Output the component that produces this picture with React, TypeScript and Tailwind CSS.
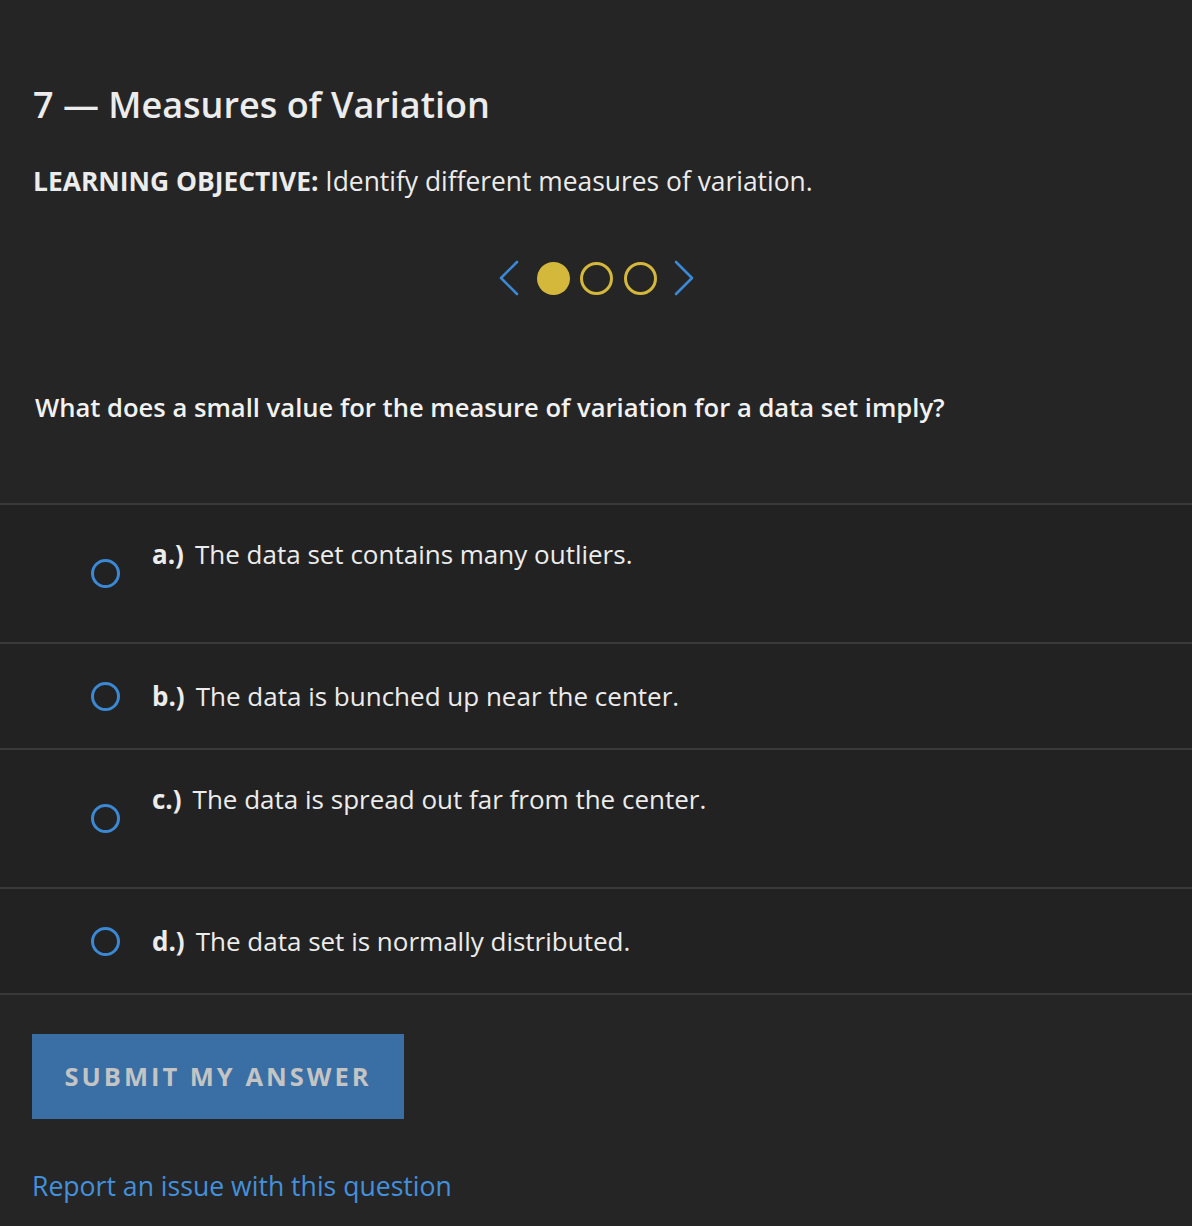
const options = [
  { key: "a.)", text: "The data set contains many outliers.", tall: true },
  { key: "b.)", text: "The data is bunched up near the center.", tall: false },
  { key: "c.)", text: "The data is spread out far from the center.", tall: true },
  { key: "d.)", text: "The data set is normally distributed.", tall: false },
];

const Radio = () => (
  <span className="block h-[29px] w-[29px] shrink-0 rounded-full border-[3px] border-[#3b88d4]" />
);

const Chevron = ({ right }: { right?: boolean }) => (
  <svg width="20" height="36" viewBox="0 0 20 36" fill="none" className="text-[#3b88d4]">
    <path
      d={right ? "M2 2 L18 18 L2 34" : "M18 2 L2 18 L18 34"}
      stroke="currentColor"
      strokeWidth="2.6"
      strokeLinecap="round"
      strokeLinejoin="round"
    />
  </svg>
);

const App = () => {
  return (
    <div
      className="min-h-screen w-full bg-[#252525] pb-10 text-[#f0f0f0]"
      style={{ fontFamily: "'Open Sans', Lato, sans-serif" }}
    >
      <div className="px-[33px] pt-[82px]">
        <h1 className="text-[36px] font-semibold leading-[46px] text-[#ececec]">7 — Measures of Variation</h1>
        <p className="mt-[36px] text-[26.4px] leading-[34px] text-[#ececec]">
          <span className="font-bold">LEARNING OBJECTIVE:</span> Identify different measures of variation.
        </p>
        <div className="mt-[62px] flex items-center justify-center">
          <Chevron />
          <span className="ml-[18px] h-[33px] w-[33px] rounded-full bg-[#d4b83c]" />
          <span className="ml-[10px] h-[33px] w-[33px] rounded-full border-[3px] border-[#d4b83c]" />
          <span className="ml-[11px] h-[33px] w-[33px] rounded-full border-[3px] border-[#d4b83c]" />
          <span className="ml-[17px]">
            <Chevron right />
          </span>
        </div>
        <p className="mt-[95px] pl-[2px] text-[25.6px] font-semibold leading-[34px] text-[#f2f2f2]">
          What does a small value for the measure of variation for a data set imply?
        </p>
      </div>

      <div className="mt-[78px] border-t-2 border-[#393939]">
        {options.map((o) => (
          <div
            key={o.key}
            className={`flex border-b-2 border-[#393939] bg-[#222222] pl-[91px] ${
              o.tall ? "h-[139px] items-start pt-[32px]" : "h-[106px] items-center"
            }`}
          >
            <div className={o.tall ? "pt-[22px]" : ""}>
              <Radio />
            </div>
            <p className="ml-[32px] text-[26px] leading-[34px] text-[#ececec]">
              <span className="mr-[11px] font-bold">{o.key}</span>
              {o.text}
            </p>
          </div>
        ))}
      </div>

      <div className="px-[32px]">
        <button className="mt-[39px] flex h-[85px] w-[372px] items-center justify-center bg-[#3a6fa5] text-[25.5px] font-bold tracking-[3px] text-[#c4c4c4]">
          SUBMIT MY ANSWER
        </button>
        <a className="mt-[50px] block text-[26.6px] leading-[34px] text-[#4390dc]" href="#">
          Report an issue with this question
        </a>
      </div>
    </div>
  );
};

export default App;
